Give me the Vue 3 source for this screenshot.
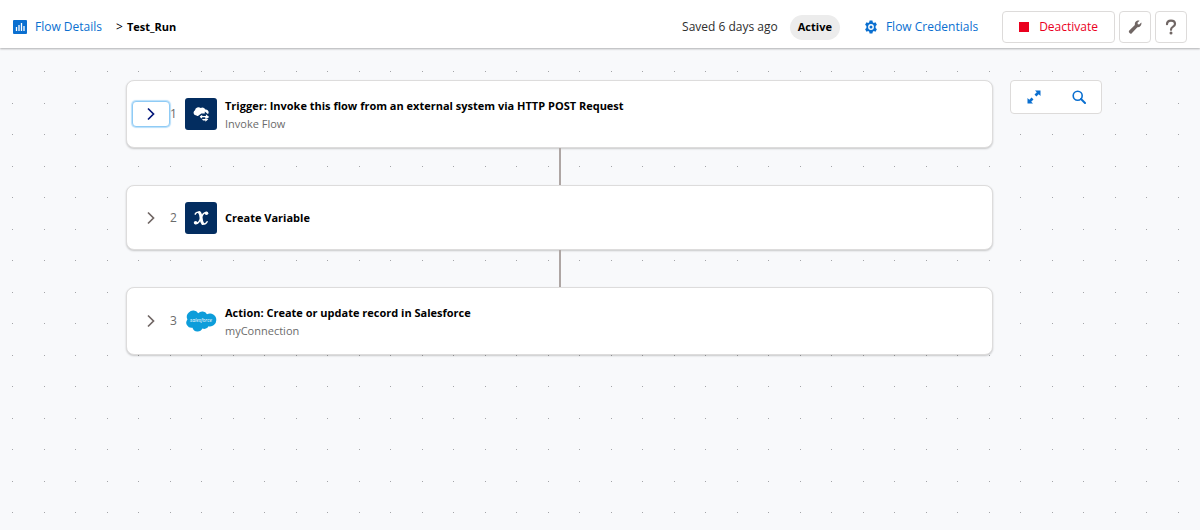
<script setup>
const steps = [
  { id: 1, title: 'Trigger: Invoke this flow from an external system via HTTP POST Request', detail: 'Invoke Flow', icon: 'cloud', focused: true },
  { id: 2, title: 'Create Variable', detail: '', icon: 'variable', focused: false },
  { id: 3, title: 'Action: Create or update record in Salesforce', detail: 'myConnection', icon: 'salesforce', focused: false },
]
</script>

<template>
  <div class="app">
    <header class="bar">
      <nav class="crumbs" aria-label="Breadcrumb">
        <a href="#" class="link">
          <svg class="chart" viewBox="0 0 14 14" aria-hidden="true">
            <rect width="14" height="14" rx="1" fill="#0a6fd0" />
            <path d="M3.500 7v4M6 5v6M8.500 3v8M11 6v5" stroke="#fff" stroke-width="1.300" />
          </svg>
          <span>Flow Details</span>
        </a>
        <span class="sep">&gt;</span>
        <strong class="name">Test_Run</strong>
      </nav>
      <div class="tools">
        <span class="saved">Saved 6 days ago</span>
        <span class="badge">Active</span>
        <a href="#" class="link credentials">
          <svg class="gear" viewBox="0 0 14 14" aria-hidden="true">
            <path fill="#0a6fd0" fill-rule="evenodd" d="M5.600.6h2.800l.4 1.700 1 .6 1.700-.6 1.400 2.500-1.300 1.300v1.800l1.300 1.300-1.400 2.500-1.700-.6-1 .6-.4 1.700H5.600l-.4-1.700-1-.6-1.700.6L1.100 9.200 2.400 7.900V6.100L1.100 4.800l1.400-2.500 1.700.6 1-.6zM7 4.100a2.900 2.900 0 1 0 0 5.800 2.900 2.900 0 0 0 0-5.800z" />
            <circle cx="7" cy="7" r="1.500" fill="#0a6fd0" />
          </svg>
          <span>Flow Credentials</span>
        </a>
        <div class="buttons">
          <button type="button" class="btn deactivate"><span class="stop"></span>Deactivate</button>
          <button type="button" class="btn square" aria-label="Settings">
            <svg width="14" height="14" viewBox="0 0 14 14" aria-hidden="true">
              <path fill="#706664" d="M9.600.6c.7-.2 1.300-.1 1.900.1L9.500 2.800l.3 1.400 1.400.3 2.100-2c.7 2.300-1.100 5-3.900 4.700L4 12.900a1.600 1.600 0 0 1-2.600-.1 1.600 1.600 0 0 1-.1-2.200L6.900 5C6.400 2.800 7.900 1 9.600.6z" />
            </svg>
          </button>
          <button type="button" class="btn square" aria-label="Help">
            <svg width="12" height="16" viewBox="0 0 12 16" aria-hidden="true">
              <path d="M2 5.200C2 2.900 3.700 1.600 6 1.600s4 1.300 4 3.300c0 1.600-1.100 2.300-2.200 3C6.600 8.600 6 9.200 6 10.800" fill="none" stroke="#706664" stroke-width="2.200" stroke-linecap="round" />
              <circle cx="6" cy="14" r="1.500" fill="#706664" />
            </svg>
          </button>
        </div>
      </div>
    </header>

    <main class="canvas">
      <ol class="steps">
        <li v-for="step in steps" :key="step.id" class="step">
          <article class="card" :class="{ single: !step.detail }">
            <button type="button" class="toggle" :class="{ focused: step.focused }" :aria-label="`Expand step ${step.id}`">
              <svg width="8" height="14" viewBox="0 0 8 14" aria-hidden="true">
                <path d="M1 1.500 6.500 7 1 12.500" fill="none" stroke="currentColor" stroke-width="1.700" />
              </svg>
            </button>
            <span class="num">{{ step.id }}</span>
            <svg v-if="step.icon === 'cloud'" class="icon" viewBox="0 0 32 32" aria-hidden="true">
              <rect width="32" height="32" rx="3" fill="#032d60" />
              <path fill="#fff" d="M9.400 16.800a3.300 3.300 0 0 1 .6-4.600 3.500 3.500 0 0 1 5.700-2.200 3.200 3.200 0 0 1 4.700 1.500 3 3 0 0 1 3.200 3.700l-.8.900-3-2.500v2h-3.500l-3.300 2.300c-.9.200-1.500-.1-1.900-.7-.7.100-1.300 0-1.700-.4z" />
              <path fill="#fff" d="M14.700 18.400l2.500-1.700v1.200h3.700v-1.700l3.300 2.800-1.700 1.300h-2.300v-1.100h-3.100v1.100h-1.100z" />
              <path fill="#fff" d="M17 20.900h3.400v-1l2.900 1.400-2.900 2.500v-1.400H18z" />
            </svg>
            <svg v-else-if="step.icon === 'variable'" class="icon" viewBox="0 0 32 32" aria-hidden="true">
              <rect width="32" height="32" rx="3" fill="#032d60" />
              <g fill="none" stroke="#fff" stroke-linecap="round">
                <path stroke-width="3" d="M14.400 10.500c2.500 2.300.9 8.500 3.300 11" />
                <path stroke-width="1.500" d="M10.200 12.200c.9-1.800 2.800-2.500 4.200-1.700M17.700 21.500c1.500 1 3.400.3 4.400-1.800" />
                <path stroke-width="1.500" d="M21.800 10.600c-3.200-1-4.900 3-5.900 5.500s-2.500 6.300-5.500 5.200" />
              </g>
              <circle cx="21.500" cy="11.300" r="1.800" fill="#fff" />
              <circle cx="10.600" cy="20.700" r="1.800" fill="#fff" />
            </svg>
            <svg v-else class="icon" viewBox="0 0 32 32" aria-hidden="true">
              <path fill="#0d9dda" d="M13.200 8.200a5.500 5.500 0 0 1 8.800 1 6.400 6.400 0 0 1 9.300 5.800 6.300 6.300 0 0 1-7.800 6.200 4.700 4.700 0 0 1-6.100 2.300 5.300 5.300 0 0 1-9.900-.8A5.200 5.200 0 0 1 2.400 14.400 6 6 0 0 1 3.800 7.400a5.900 5.900 0 0 1 9.400.8z" />
              <text x="16" y="17" class="logo-text" text-anchor="middle">salesforce</text>
            </svg>
            <div class="text">
              <h2 class="title">{{ step.title }}</h2>
              <p v-if="step.detail" class="detail">{{ step.detail }}</p>
            </div>
          </article>
        </li>
      </ol>
      <div class="panel">
        <button type="button" class="view" aria-label="Expand all">
          <svg width="14" height="14" viewBox="0 0 14 14" aria-hidden="true">
            <path fill="#0a6fd0" d="M8 .5h5.500V6l-1.800-1.800-2.300 2.300-1.900-1.900 2.300-2.300zM6 13.500H.5V8l1.800 1.800 2.300-2.300 1.900 1.900-2.300 2.300z" />
          </svg>
        </button>
        <button type="button" class="view" aria-label="Search">
          <svg width="14" height="14" viewBox="0 0 14 14" aria-hidden="true">
            <circle cx="5.700" cy="5.700" r="4.500" fill="none" stroke="#0a6fd0" stroke-width="1.600" />
            <path d="M9 9l4 4" stroke="#0a6fd0" stroke-width="2" stroke-linecap="round" />
          </svg>
        </button>
      </div>
    </main>
  </div>
</template>

<style>
body { margin: 0; background: #f8f9fb; }
</style>

<style scoped>
.app {
  display: flex;
  flex-direction: column;
  min-height: 100vh;
  font-family: "Open Sans", "Noto Sans", sans-serif;
  font-size: 12px;
  line-height: 18px;
  color: #000;
}
.bar {
  position: relative;
  display: flex;
  align-items: center;
  justify-content: space-between;
  height: 48px;
  box-sizing: border-box;
  padding: 6px 13px 0;
  background: #fff;
  box-shadow: 0 1px 2px #0000004d;
}
.crumbs, .tools, .buttons, .link { display: flex; align-items: center; }
.link { gap: 8px; color: #0a6fd0; text-decoration: none; }
.chart, .gear { width: 14px; height: 14px; }
.sep { margin: 0 4px 0 14px; }
.name, .badge, .title, .detail { font-size: 11px; line-height: 18px; }
.name, .badge, .title { font-weight: 700; }
.saved { color: #2e2e2e; }
.badge {
  margin: 0 24px 0 12px;
  padding: 3px 8px 4px;
  border-radius: 13px;
  background: #ececec;
}
.buttons { gap: 4px; margin-left: 24px; }
.btn {
  display: flex;
  align-items: center;
  justify-content: center;
  height: 32px;
  box-sizing: border-box;
  border: 1px solid #dddbda;
  border-radius: 4px;
  padding: 0;
  background: #fff;
  font: inherit;
}
.square { width: 32px; }
.deactivate { gap: 10px; padding: 0 16px; color: #ea001e; }
.stop { width: 10px; height: 10px; background: #ea001e; }
.canvas {
  flex: 1;
  display: flex;
  align-items: flex-start;
  gap: 17px;
  padding: 32px 98px 32px 126px;
  background-color: #f8f9fb;
  background-image: url("data:image/svg+xml,%3Csvg xmlns='http://www.w3.org/2000/svg' width='63' height='63'%3E%3Cpath fill='%23a4a5a8' d='M12 23h1v1h-1zM44 23h1v1h-1zM12 55h1v1h-1zM44 55h1v1h-1z'/%3E%3C/svg%3E");
}
.steps { flex: 1; min-width: 0; margin: 0; padding: 0; list-style: none; }
.step + .step::before {
  content: "";
  display: block;
  width: 2px;
  height: 37px;
  margin: 0 auto;
  background: #aea6a4;
}
.card {
  display: flex;
  align-items: center;
  box-sizing: border-box;
  min-height: 68px;
  padding: 0 16px 0 5px;
  border: 1px solid #dddcdc;
  border-radius: 8px;
  background: #fff;
  box-shadow: 0 1px 2px #00000033;
}
.single { min-height: 65px; }
.toggle {
  display: flex;
  align-items: center;
  justify-content: center;
  width: 38px;
  height: 26px;
  box-sizing: border-box;
  padding: 0;
  border: 1px solid transparent;
  border-radius: 4px;
  background: #fff;
  color: #706664;
}
.focused { border-color: #8fcbf5; box-shadow: 0 0 1px 1px #b9dffa; color: #03177a; }
.num { width: 8px; margin-right: 7px; font-size: 12px; color: #6b6b6b; }
.icon { flex: none; width: 32px; height: 32px; }
.logo-text { font: italic 5px "Open Sans", sans-serif; fill: #fff; }
.text { margin-left: 8px; padding-top: 1px; }
.title { margin: 0; }
.detail { margin: 0; color: #6b6b6b; }
.panel {
  display: grid;
  grid-template-columns: 1fr 1fr;
  width: 92px;
  height: 34px;
  box-sizing: border-box;
  border: 1px solid #dddbda;
  border-radius: 4px;
  background: #fff;
}
.view { display: flex; align-items: center; justify-content: center; border: 0; padding: 0; background: none; }
</style>
